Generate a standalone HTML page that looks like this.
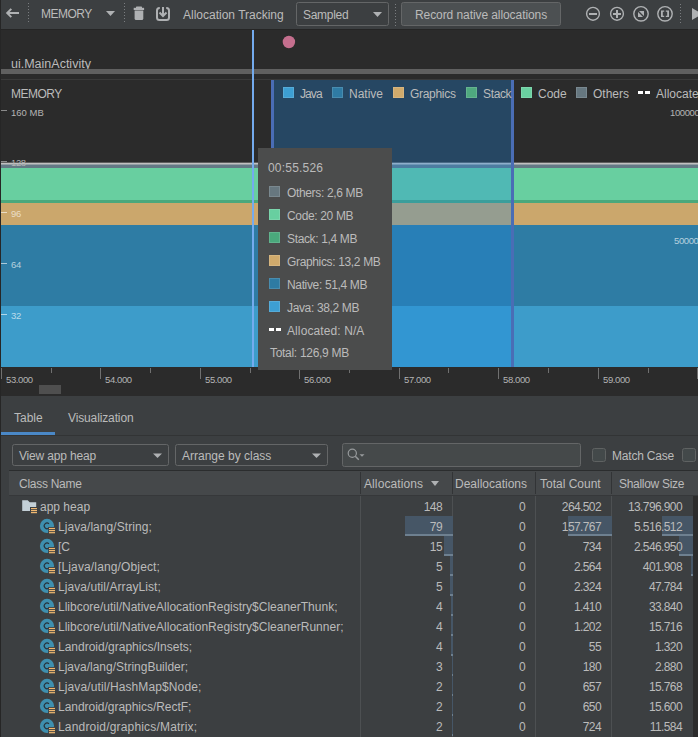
<!DOCTYPE html>
<html><head><meta charset="utf-8">
<style>
*{margin:0;padding:0;box-sizing:border-box}
html,body{width:698px;height:737px;overflow:hidden;background:#2b2b2b}
body{position:relative;font-family:"Liberation Sans",sans-serif;color:#bbbbbb;font-size:12px}
.a{position:absolute}
.t{position:absolute;white-space:nowrap;line-height:12px;font-size:12px}
.s{position:absolute;white-space:nowrap;line-height:10px;font-size:9.5px;color:#b4b4b4;letter-spacing:-0.4px}
svg{position:absolute;overflow:visible}
.r{width:150px;text-align:right}
.sq{box-shadow:inset 0 0 0 1px rgba(255,255,255,0.13)}
.bar{position:absolute;height:20px;background:#465666;border-bottom:2px solid #6e8090}
</style></head><body>

<!-- TOOLBAR -->
<div class="a" style="left:0;top:0;width:1px;height:737px;background:#262626"></div>
<div class="a" style="left:1px;top:0;width:697px;height:29px;background:#3c3f41"></div>
<div class="a" style="left:1px;top:29px;width:697px;height:1px;background:#252525"></div>

<svg style="left:0;top:0" width="698" height="29">
  <!-- back arrow -->
  <path d="M19 13 H7.5 M11.3 8.9 L7.2 13 L11.3 17.1" fill="none" stroke="#afb1b3" stroke-width="2"/>
  <!-- dotted separators -->
  <g fill="#7a7d80">
    <rect x="28" y="3" width="1" height="1"/><rect x="28" y="6" width="1" height="1"/><rect x="28" y="9" width="1" height="1"/><rect x="28" y="12" width="1" height="1"/><rect x="28" y="15" width="1" height="1"/><rect x="28" y="18" width="1" height="1"/><rect x="28" y="21" width="1" height="1"/>
    <rect x="124" y="3" width="1" height="1"/><rect x="124" y="6" width="1" height="1"/><rect x="124" y="9" width="1" height="1"/><rect x="124" y="12" width="1" height="1"/><rect x="124" y="15" width="1" height="1"/><rect x="124" y="18" width="1" height="1"/><rect x="124" y="21" width="1" height="1"/>
    <rect x="395" y="4" width="1" height="1"/><rect x="395" y="7" width="1" height="1"/><rect x="395" y="10" width="1" height="1"/><rect x="395" y="13" width="1" height="1"/><rect x="395" y="16" width="1" height="1"/><rect x="395" y="19" width="1" height="1"/><rect x="395" y="22" width="1" height="1"/><rect x="395" y="25" width="1" height="1"/>
    <rect x="680" y="4" width="1" height="1"/><rect x="680" y="7" width="1" height="1"/><rect x="680" y="10" width="1" height="1"/><rect x="680" y="13" width="1" height="1"/><rect x="680" y="16" width="1" height="1"/><rect x="680" y="19" width="1" height="1"/><rect x="680" y="22" width="1" height="1"/>
  </g>
  <!-- dropdown triangle -->
  <path d="M106 11 H115 L110.5 16 Z" fill="#afb1b3"/>
  <!-- trash -->
  <path d="M133.7 7.8 H144.1 V10 H133.7 Z" fill="#afb1b3"/>
  <path d="M136 6.8 Q136 6.5 137 6.5 H141 Q142 6.5 142 6.8 V8 H136 Z" fill="#afb1b3"/>
  <path d="M134.6 10.6 H143.3 V18.4 Q143.3 19.9 141.8 19.9 H136.1 Q134.6 19.9 134.6 18.4 Z" fill="#afb1b3"/>
  <!-- save -->
  <path d="M159.8 8 H159.5 Q157 8 157 10.5 V17.5 Q157 20 159.5 20 H166.5 Q169 20 169 17.5 V10.5 Q169 8 166.5 8 H166.2" fill="none" stroke="#afb1b3" stroke-width="2"/>
  <path d="M163 7 V16 M159.5 12.5 L163 16 L166.5 12.5" fill="none" stroke="#afb1b3" stroke-width="2"/>
  <!-- Sampled combo -->
  <rect x="296.5" y="2.5" width="92" height="23" rx="2" fill="#3c3f41" stroke="#646667"/>
  <path d="M373 12 H382 L377.5 17 Z" fill="#afb1b3"/>
  <!-- record button -->
  <rect x="401.5" y="2.5" width="159" height="23" rx="2" fill="#4c5052" stroke="#646667"/>
  <!-- zoom icons -->
  <g fill="none" stroke="#afb1b3" stroke-width="1.4">
    <circle cx="593" cy="13.8" r="6.4"/>
    <circle cx="617" cy="13.8" r="6.4"/>
    <circle cx="641" cy="13.8" r="7.2"/>
    <circle cx="665" cy="13.8" r="7.2"/>
  </g>
  <g fill="#afb1b3">
    <rect x="589" y="13" width="8" height="2"/>
    <rect x="613" y="13" width="8" height="2"/><rect x="616" y="10" width="2" height="8"/>
    <path d="M638 11 H644 V17 H638 Z" />
    <path d="M661 10.5 H664.2 V11.8 H662.8 V15.7 H664.2 V17 H661 Z M669 10.5 H665.8 V11.8 H667.2 V15.7 H665.8 V17 H669 Z"/>
    <path d="M692 8 L702 14 L692 20 Z"/>
  </g>
  <path d="M637.8 10.8 L644.2 17.2" stroke="#3c3f41" stroke-width="1.3"/>
</svg>
<div class="t" style="left:41px;top:8px;letter-spacing:-0.5px">MEMORY</div>
<div class="t" style="left:183px;top:9px">Allocation Tracking</div>
<div class="t" style="left:303px;top:9px;letter-spacing:-0.3px">Sampled</div>
<div class="t" style="left:415px;top:9px;letter-spacing:-0.08px">Record native allocations</div>

<!-- EVENTS -->
<svg style="left:0;top:0" width="698" height="60"><circle cx="288.9" cy="42" r="6.2" fill="#c56f8e"/></svg>
<div class="t" style="left:11px;top:58px;font-size:12.5px">ui.MainActivity</div>
<div class="a" style="left:1px;top:69px;width:697px;height:5px;background:#606060"></div>
<div class="a" style="left:1px;top:79px;width:697px;height:1px;background:#3b3b3b"></div>

<!-- MEMORY CHART -->
<div class="a" style="left:1px;top:162px;width:697px;height:1px;background:#5e5e5e"></div>
<div class="a" style="left:1px;top:163px;width:697px;height:1px;background:#c0c0c0"></div>
<div class="a" style="left:1px;top:164px;width:697px;height:1px;background:#939ea4"></div>
<div class="a" style="left:1px;top:165px;width:697px;height:3px;background:#647985"></div>
<div class="a" style="left:1px;top:168px;width:697px;height:32px;background:#68cfa0"></div>
<div class="a" style="left:1px;top:200px;width:697px;height:3px;background:#4aa87c"></div>
<div class="a" style="left:1px;top:203px;width:697px;height:22px;background:#cba76c"></div>
<div class="a" style="left:1px;top:225px;width:697px;height:81px;background:#2e7ca4"></div>
<div class="a" style="left:1px;top:306px;width:697px;height:61px;background:#3d9cca"></div>

<!-- selection -->
<div class="a" style="left:271px;top:80px;width:243px;height:287px;background:rgba(26,136,230,0.3)"></div>
<div class="a" style="left:271px;top:80px;width:3px;height:287px;background:#4a6db5"></div>
<div class="a" style="left:511px;top:80px;width:3px;height:287px;background:#4a6db5"></div>

<!-- y labels -->
<div class="t" style="left:11px;top:88px;letter-spacing:-0.5px">MEMORY</div>
<div class="a" style="left:1px;top:110px;width:6px;height:1px;background:#8a8a8a"></div>
<div class="s" style="left:11px;top:108px;letter-spacing:0">160 MB</div>
<div class="a" style="left:1px;top:161px;width:6px;height:1px;background:#8a8a8a"></div>
<div class="s" style="left:11px;top:158px">128</div>
<div class="a" style="left:1px;top:212px;width:6px;height:1px;background:rgba(255,255,255,0.6)"></div>
<div class="s" style="left:11px;top:209px;color:rgba(255,255,255,0.62)">96</div>
<div class="a" style="left:1px;top:263px;width:6px;height:1px;background:rgba(255,255,255,0.6)"></div>
<div class="s" style="left:11px;top:260px;color:rgba(255,255,255,0.65)">64</div>
<div class="a" style="left:1px;top:314px;width:6px;height:1px;background:rgba(255,255,255,0.6)"></div>
<div class="s" style="left:11px;top:311px;color:rgba(255,255,255,0.65)">32</div>
<div class="s" style="left:670px;top:108px">100000</div>
<div class="s" style="left:674px;top:236px;color:rgba(255,255,255,0.65)">50000</div>

<!-- legend -->
<div class="a sq" style="left:283px;top:87px;width:11px;height:11px;background:#3d9fd3"></div>
<div class="t" style="left:300px;top:88px;letter-spacing:-0.9px">Java</div>
<div class="a sq" style="left:332px;top:87px;width:11px;height:11px;background:#2f7ba4"></div>
<div class="t" style="left:349px;top:88px">Native</div>
<div class="a sq" style="left:393px;top:87px;width:11px;height:11px;background:#d1ab6c"></div>
<div class="t" style="left:410px;top:88px;letter-spacing:-0.3px">Graphics</div>
<div class="a sq" style="left:466px;top:87px;width:11px;height:11px;background:#4fa87f"></div>
<div class="t" style="left:483px;top:88px;letter-spacing:-0.35px">Stack</div>
<div class="a sq" style="left:521px;top:87px;width:11px;height:11px;background:#6ad0a0"></div>
<div class="t" style="left:538px;top:88px">Code</div>
<div class="a sq" style="left:576px;top:87px;width:11px;height:11px;background:#667780"></div>
<div class="t" style="left:593px;top:88px">Others</div>
<div class="a" style="left:638px;top:91px;width:5px;height:3px;background:#ffffff"></div>
<div class="a" style="left:645px;top:91px;width:5px;height:3px;background:#ffffff"></div>
<div class="t" style="left:656px;top:88px">Allocated</div>

<!-- blue time line -->
<div class="a" style="left:252px;top:30px;width:2px;height:337px;background:#74abee"></div>

<!-- axis -->
<div class="a" style="left:1px;top:368px;width:1px;height:11px;background:#707070"></div>
<div class="s" style="left:6px;top:375px">53.000</div>
<div class="a" style="left:100px;top:368px;width:1px;height:11px;background:#707070"></div>
<div class="s" style="left:105px;top:375px">54.000</div>
<div class="a" style="left:200px;top:368px;width:1px;height:11px;background:#707070"></div>
<div class="s" style="left:205px;top:375px">55.000</div>
<div class="a" style="left:299px;top:368px;width:1px;height:11px;background:#707070"></div>
<div class="s" style="left:304px;top:375px">56.000</div>
<div class="a" style="left:399px;top:368px;width:1px;height:11px;background:#707070"></div>
<div class="s" style="left:404px;top:375px">57.000</div>
<div class="a" style="left:498px;top:368px;width:1px;height:11px;background:#707070"></div>
<div class="s" style="left:503px;top:375px">58.000</div>
<div class="a" style="left:598px;top:368px;width:1px;height:11px;background:#707070"></div>
<div class="s" style="left:603px;top:375px">59.000</div>
<div class="a" style="left:697px;top:368px;width:1px;height:11px;background:#707070"></div>
<div class="a" style="left:51px;top:368px;width:1px;height:5px;background:#707070"></div>
<div class="a" style="left:150px;top:368px;width:1px;height:5px;background:#707070"></div>
<div class="a" style="left:250px;top:368px;width:1px;height:5px;background:#707070"></div>
<div class="a" style="left:349px;top:368px;width:1px;height:5px;background:#707070"></div>
<div class="a" style="left:448px;top:368px;width:1px;height:5px;background:#707070"></div>
<div class="a" style="left:548px;top:368px;width:1px;height:5px;background:#707070"></div>
<div class="a" style="left:648px;top:368px;width:1px;height:5px;background:#707070"></div>
<div class="a" style="left:39px;top:385px;width:22px;height:9px;background:#4f4f4f"></div>

<!-- tooltip -->
<div class="a" style="left:258px;top:148px;width:134px;height:222px;background:#4b4c4c"></div>
<div class="t" style="left:268px;top:162px;letter-spacing:0.2px">00:55.526</div>
<div class="a sq" style="left:269px;top:186px;width:11px;height:11px;background:#67777f"></div>
<div class="t" style="left:287px;top:187px;letter-spacing:-0.35px">Others: 2,6 MB</div>
<div class="a sq" style="left:269px;top:209px;width:11px;height:11px;background:#68cfa0"></div>
<div class="t" style="left:287px;top:210px;letter-spacing:-0.35px">Code: 20 MB</div>
<div class="a sq" style="left:269px;top:232px;width:11px;height:11px;background:#4aa87c"></div>
<div class="t" style="left:287px;top:233px;letter-spacing:-0.35px">Stack: 1,4 MB</div>
<div class="a sq" style="left:269px;top:255px;width:11px;height:11px;background:#d0aa6c"></div>
<div class="t" style="left:287px;top:256px;letter-spacing:-0.35px">Graphics: 13,2 MB</div>
<div class="a sq" style="left:269px;top:278px;width:11px;height:11px;background:#2e7ba3"></div>
<div class="t" style="left:287px;top:279px;letter-spacing:-0.35px">Native: 51,4 MB</div>
<div class="a sq" style="left:269px;top:301px;width:11px;height:11px;background:#3d9fd3"></div>
<div class="t" style="left:287px;top:302px;letter-spacing:-0.35px">Java: 38,2 MB</div>
<div class="a" style="left:269px;top:328px;width:5px;height:3px;background:#fff"></div>
<div class="a" style="left:276px;top:328px;width:5px;height:3px;background:#fff"></div>
<div class="t" style="left:287px;top:325px;letter-spacing:0.1px">Allocated: N/A</div>
<div class="t" style="left:270px;top:347px;letter-spacing:-0.3px">Total: 126,9 MB</div>

<!-- BOTTOM PANEL -->
<div class="a" style="left:1px;top:396px;width:697px;height:341px;background:#3c3f41"></div>
<div class="t" style="left:14px;top:412px">Table</div>
<div class="t" style="left:68px;top:412px;letter-spacing:-0.13px">Visualization</div>
<div class="a" style="left:1px;top:432px;width:54px;height:3px;background:#4a88c7"></div>
<div class="a" style="left:1px;top:435px;width:697px;height:1px;background:#323435"></div>

<svg style="left:0;top:436px" width="698" height="34">
  <rect x="12.5" y="8.5" width="156" height="21" rx="2" fill="#3c3f41" stroke="#646667"/>
  <path d="M153 17.5 H162 L157.5 22 Z" fill="#afb1b3"/>
  <rect x="175.5" y="8.5" width="152" height="21" rx="2" fill="#3c3f41" stroke="#646667"/>
  <path d="M312 17.5 H321 L316.5 22 Z" fill="#afb1b3"/>
  <rect x="342.5" y="7.5" width="238" height="23" rx="2" fill="#45494a" stroke="#646667"/>
  <circle cx="352.3" cy="17.3" r="4.1" fill="none" stroke="#979a9c" stroke-width="1.2"/>
  <path d="M355.3 20.3 L358.8 23.8" stroke="#979a9c" stroke-width="1.5"/>
  <path d="M359.5 18.3 H364.5 L362 20.8 Z" fill="#979a9c"/>
  <rect x="592.5" y="12.5" width="13" height="13" rx="2" fill="#43494a" stroke="#5f6262"/>
  <rect x="682.5" y="12.5" width="13" height="13" rx="2" fill="#43494a" stroke="#5f6262"/>
</svg>
<div class="t" style="left:19px;top:450px;letter-spacing:-0.17px">View app heap</div>
<div class="t" style="left:182px;top:450px">Arrange by class</div>
<div class="t" style="left:612px;top:450px;letter-spacing:-0.2px">Match Case</div>

<!-- table header -->
<div class="a" style="left:9px;top:470px;width:689px;height:1px;background:#2b2d2e"></div>
<div class="a" style="left:9px;top:471px;width:689px;height:24px;background:#45484a"></div>
<div class="a" style="left:9px;top:495px;width:689px;height:1px;background:#36383a"></div>
<div class="a" style="left:360px;top:472px;width:1px;height:22px;background:#323436"></div>
<div class="a" style="left:452px;top:472px;width:1px;height:22px;background:#323436"></div>
<div class="a" style="left:535px;top:472px;width:1px;height:22px;background:#323436"></div>
<div class="a" style="left:611px;top:472px;width:1px;height:22px;background:#323436"></div>
<div class="t" style="left:19px;top:478px;letter-spacing:-0.27px">Class Name</div>
<div class="t" style="left:364px;top:478px;letter-spacing:0.1px">Allocations</div>
<svg style="left:0;top:470px" width="698" height="25"><path d="M431 11 H439 L435 16 Z" fill="#afb1b3"/></svg>
<div class="t" style="left:455px;top:478px">Deallocations</div>
<div class="t" style="left:540px;top:478px">Total Count</div>
<div class="t" style="left:619px;top:478px;letter-spacing:-0.3px">Shallow Size</div>

<!-- body grid -->
<div class="a" style="left:360px;top:496px;width:1px;height:241px;background:#4d5052"></div>
<div class="a" style="left:452px;top:496px;width:1px;height:241px;background:#4d5052"></div>
<div class="a" style="left:535px;top:496px;width:1px;height:241px;background:#4d5052"></div>
<div class="a" style="left:611px;top:496px;width:1px;height:241px;background:#4d5052"></div>
<div class="a" style="left:693px;top:496px;width:5px;height:241px;background:#2c2c2c"></div>

<svg width="0" height="0" style="position:absolute">
  <defs>
    <g id="fold">
      <path d="M1.2 1.3 H6.7 L8.7 3.3 H15.2 V12 H1.2 Z" fill="#c3cfd6"/>
      <rect x="9" y="8" width="8" height="7" fill="#3c3f41"/>
      <rect x="10" y="9" width="6" height="1.2" fill="#f0b870"/>
      <rect x="10" y="11" width="6" height="1.2" fill="#f0b870"/>
      <rect x="10" y="13" width="6" height="1.2" fill="#f0b870"/>
    </g>
    <g id="cls">
      <circle cx="8" cy="7.9" r="7.1" fill="#3e8fae"/>
      <path d="M10 5.9 A2.8 2.8 0 1 0 10 9.9" fill="none" stroke="#26323a" stroke-width="1.1"/>
      <rect x="9.2" y="9" width="8.2" height="6.6" fill="#3c3f41"/>
      <rect x="10" y="9.9" width="6" height="1.2" fill="#f0b870"/>
      <rect x="10" y="12" width="6" height="1.2" fill="#f0b870"/>
      <rect x="10" y="14.1" width="6" height="1.2" fill="#f0b870"/>
    </g>
  </defs>
</svg>
<svg class="ic" style="left:21px;top:499px" width="18" height="15"><use href="#fold"/></svg>
<div class="t" style="left:40px;top:501px">app heap</div>
<div class="t r" style="left:292px;top:501px;letter-spacing:-0.6px">148</div>
<div class="t r" style="left:375px;top:501px;letter-spacing:-0.6px">0</div>
<div class="t r" style="left:451px;top:501px;letter-spacing:-0.6px">264.502</div>
<div class="t r" style="left:532px;top:501px;letter-spacing:-0.6px">13.796.900</div>
<div class="bar" style="left:405px;top:516px;width:48px"></div>
<div class="bar" style="left:568px;top:516px;width:44px"></div>
<div class="bar" style="left:662px;top:516px;width:31px"></div>
<svg class="ic" style="left:39px;top:518px" width="18" height="16"><use href="#cls"/></svg>
<div class="t" style="left:58px;top:521px;letter-spacing:0.06px">Ljava/lang/String;</div>
<div class="t r" style="left:292px;top:521px;letter-spacing:-0.6px">79</div>
<div class="t r" style="left:375px;top:521px;letter-spacing:-0.6px">0</div>
<div class="t r" style="left:451px;top:521px;letter-spacing:-0.6px">157.767</div>
<div class="t r" style="left:532px;top:521px;letter-spacing:-0.6px">5.516.512</div>
<div class="bar" style="left:444px;top:536px;width:9px"></div>
<div class="bar" style="left:679px;top:536px;width:14px"></div>
<svg class="ic" style="left:39px;top:538px" width="18" height="16"><use href="#cls"/></svg>
<div class="t" style="left:58px;top:541px;letter-spacing:0px">[C</div>
<div class="t r" style="left:292px;top:541px;letter-spacing:-0.6px">15</div>
<div class="t r" style="left:375px;top:541px;letter-spacing:-0.6px">0</div>
<div class="t r" style="left:451px;top:541px;letter-spacing:-0.6px">734</div>
<div class="t r" style="left:532px;top:541px;letter-spacing:-0.6px">2.546.950</div>
<div class="bar" style="left:450px;top:556px;width:3px"></div>
<div class="bar" style="left:691px;top:556px;width:2px"></div>
<svg class="ic" style="left:39px;top:558px" width="18" height="16"><use href="#cls"/></svg>
<div class="t" style="left:58px;top:561px;letter-spacing:0.14px">[Ljava/lang/Object;</div>
<div class="t r" style="left:292px;top:561px;letter-spacing:-0.6px">5</div>
<div class="t r" style="left:375px;top:561px;letter-spacing:-0.6px">0</div>
<div class="t r" style="left:451px;top:561px;letter-spacing:-0.6px">2.564</div>
<div class="t r" style="left:532px;top:561px;letter-spacing:-0.6px">401.908</div>
<div class="bar" style="left:450px;top:576px;width:3px"></div>
<svg class="ic" style="left:39px;top:578px" width="18" height="16"><use href="#cls"/></svg>
<div class="t" style="left:58px;top:581px;letter-spacing:0.07px">Ljava/util/ArrayList;</div>
<div class="t r" style="left:292px;top:581px;letter-spacing:-0.6px">5</div>
<div class="t r" style="left:375px;top:581px;letter-spacing:-0.6px">0</div>
<div class="t r" style="left:451px;top:581px;letter-spacing:-0.6px">2.324</div>
<div class="t r" style="left:532px;top:581px;letter-spacing:-0.6px">47.784</div>
<div class="bar" style="left:451px;top:596px;width:2px"></div>
<svg class="ic" style="left:39px;top:598px" width="18" height="16"><use href="#cls"/></svg>
<div class="t" style="left:58px;top:601px;letter-spacing:0px">Llibcore/util/NativeAllocationRegistry$CleanerThunk;</div>
<div class="t r" style="left:292px;top:601px;letter-spacing:-0.6px">4</div>
<div class="t r" style="left:375px;top:601px;letter-spacing:-0.6px">0</div>
<div class="t r" style="left:451px;top:601px;letter-spacing:-0.6px">1.410</div>
<div class="t r" style="left:532px;top:601px;letter-spacing:-0.6px">33.840</div>
<div class="bar" style="left:451px;top:616px;width:2px"></div>
<svg class="ic" style="left:39px;top:618px" width="18" height="16"><use href="#cls"/></svg>
<div class="t" style="left:58px;top:621px;letter-spacing:0px">Llibcore/util/NativeAllocationRegistry$CleanerRunner;</div>
<div class="t r" style="left:292px;top:621px;letter-spacing:-0.6px">4</div>
<div class="t r" style="left:375px;top:621px;letter-spacing:-0.6px">0</div>
<div class="t r" style="left:451px;top:621px;letter-spacing:-0.6px">1.202</div>
<div class="t r" style="left:532px;top:621px;letter-spacing:-0.6px">15.716</div>
<div class="bar" style="left:451px;top:636px;width:2px"></div>
<svg class="ic" style="left:39px;top:638px" width="18" height="16"><use href="#cls"/></svg>
<div class="t" style="left:58px;top:641px;letter-spacing:0px">Landroid/graphics/Insets;</div>
<div class="t r" style="left:292px;top:641px;letter-spacing:-0.6px">4</div>
<div class="t r" style="left:375px;top:641px;letter-spacing:-0.6px">0</div>
<div class="t r" style="left:451px;top:641px;letter-spacing:-0.6px">55</div>
<div class="t r" style="left:532px;top:641px;letter-spacing:-0.6px">1.320</div>
<div class="bar" style="left:452px;top:656px;width:1px"></div>
<svg class="ic" style="left:39px;top:658px" width="18" height="16"><use href="#cls"/></svg>
<div class="t" style="left:58px;top:661px;letter-spacing:0px">Ljava/lang/StringBuilder;</div>
<div class="t r" style="left:292px;top:661px;letter-spacing:-0.6px">3</div>
<div class="t r" style="left:375px;top:661px;letter-spacing:-0.6px">0</div>
<div class="t r" style="left:451px;top:661px;letter-spacing:-0.6px">180</div>
<div class="t r" style="left:532px;top:661px;letter-spacing:-0.6px">2.880</div>
<div class="bar" style="left:452px;top:676px;width:1px"></div>
<svg class="ic" style="left:39px;top:678px" width="18" height="16"><use href="#cls"/></svg>
<div class="t" style="left:58px;top:681px;letter-spacing:0.11px">Ljava/util/HashMap$Node;</div>
<div class="t r" style="left:292px;top:681px;letter-spacing:-0.6px">2</div>
<div class="t r" style="left:375px;top:681px;letter-spacing:-0.6px">0</div>
<div class="t r" style="left:451px;top:681px;letter-spacing:-0.6px">657</div>
<div class="t r" style="left:532px;top:681px;letter-spacing:-0.6px">15.768</div>
<div class="bar" style="left:452px;top:696px;width:1px"></div>
<svg class="ic" style="left:39px;top:698px" width="18" height="16"><use href="#cls"/></svg>
<div class="t" style="left:58px;top:701px;letter-spacing:-0.03px">Landroid/graphics/RectF;</div>
<div class="t r" style="left:292px;top:701px;letter-spacing:-0.6px">2</div>
<div class="t r" style="left:375px;top:701px;letter-spacing:-0.6px">0</div>
<div class="t r" style="left:451px;top:701px;letter-spacing:-0.6px">650</div>
<div class="t r" style="left:532px;top:701px;letter-spacing:-0.6px">15.600</div>
<div class="bar" style="left:452px;top:716px;width:1px"></div>
<svg class="ic" style="left:39px;top:718px" width="18" height="16"><use href="#cls"/></svg>
<div class="t" style="left:58px;top:721px;letter-spacing:0.18px">Landroid/graphics/Matrix;</div>
<div class="t r" style="left:292px;top:721px;letter-spacing:-0.6px">2</div>
<div class="t r" style="left:375px;top:721px;letter-spacing:-0.6px">0</div>
<div class="t r" style="left:451px;top:721px;letter-spacing:-0.6px">724</div>
<div class="t r" style="left:532px;top:721px;letter-spacing:-0.6px">11.584</div>

</body></html>
